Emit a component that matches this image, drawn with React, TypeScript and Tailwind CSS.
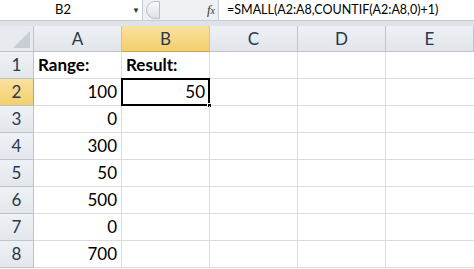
import React from "react";

const cols = ["A", "B", "C", "D", "E"];

const rows: { a: string; b: string }[] = [
  { a: "Range:", b: "Result:" },
  { a: "100", b: "50" },
  { a: "0", b: "" },
  { a: "300", b: "" },
  { a: "50", b: "" },
  { a: "500", b: "" },
  { a: "0", b: "" },
  { a: "700", b: "" },
];

const font = { fontFamily: "Lato, 'Open Sans', sans-serif" };

export default function App() {
  return (
    <div className="w-[474px] h-[269px] overflow-hidden bg-white" style={font}>
      {/* formula bar */}
      <div className="flex h-[20px] bg-white text-[13px] text-black">
        <div className="w-[143px] flex items-center border-r border-[#c6ccd4]">
          <span className="w-[126px] text-center">B2</span>
          <span className="ml-[6px] text-[8px] text-[#333]">▼</span>
        </div>
        <div className="w-[76px] flex items-center bg-[#eef0f3] border-r border-[#c6ccd4]">
          <div className="ml-[3px] w-[14px] h-[18px] rounded-l-full border border-[#b9bec6] bg-gradient-to-b from-[#f7f8fa] to-[#dde1e6]" />
          <span className="ml-auto mr-[3px] text-[13px] italic text-[#333]" style={{ fontFamily: "'Liberation Serif', serif" }}>
            f<span className="text-[10px]">x</span>
          </span>
        </div>
        <div className="flex-1 flex items-center pl-[8px] whitespace-nowrap text-[12.5px]">
          =SMALL(A2:A8,COUNTIF(A2:A8,0)+1)
        </div>
      </div>
      <div className="h-[6px] bg-[#dfe3e8] border-t border-[#c6ccd4]" />

      {/* grid */}
      <div className="grid grid-cols-[34px_88px_88px_88px_88px_1fr] grid-rows-[26px_repeat(8,27px)] text-[17px]">
        <div className="bg-[#e7eaee] border-r border-b border-[#bcc3cc] relative">
          <div
            className="absolute right-[3px] bottom-[3px] w-[17px] h-[17px] bg-[#c9ced5]"
            style={{ clipPath: "polygon(100% 0, 100% 100%, 0 100%)" }}
          />
        </div>
        {cols.map((c) => (
          <div
            key={c}
            className={`flex items-center justify-center border-r border-b border-[#bcc3cc] text-[#27384f] ${
              c === "B"
                ? "bg-gradient-to-b from-[#fae19e] to-[#f5cf6c] border-b-[#c9a450]"
                : "bg-gradient-to-b from-[#eef1f5] to-[#e1e5ea]"
            }`}
          >
            {c}
          </div>
        ))}
        {rows.map((r, i) => {
          const n = i + 1;
          const sel = n === 2;
          return (
            <React.Fragment key={n}>
              <div
                className={`flex items-center justify-center border-r border-b border-[#bcc3cc] text-[#27384f] ${
                  sel
                    ? "bg-gradient-to-b from-[#fae19e] to-[#f5cf6c] border-r-[#c9a450]"
                    : "bg-gradient-to-b from-[#eef1f5] to-[#e3e7ec]"
                }`}
              >
                {n}
              </div>
              <div
                className={`flex items-center border-r border-b border-[#dadcdd] px-[4px] ${
                  n === 1 ? "justify-start font-bold" : "justify-end"
                }`}
              >
                {r.a}
              </div>
              <div
                className={`relative flex items-center border-r border-b border-[#dadcdd] px-[4px] ${
                  n === 1 ? "justify-start font-bold" : "justify-end"
                }`}
              >
                {r.b}
                {sel && (
                  <>
                    <div className="absolute -left-[1px] -top-[1px] -right-[1px] -bottom-[1px] border-2 border-black" />
                    <div className="absolute -right-[3px] -bottom-[3px] w-[5px] h-[5px] bg-black border border-white" />
                  </>
                )}
              </div>
              <div className="border-r border-b border-[#dadcdd]" />
              <div className="border-r border-b border-[#dadcdd]" />
              <div className="border-b border-[#dadcdd]" />
            </React.Fragment>
          );
        })}
      </div>
    </div>
  );
}
